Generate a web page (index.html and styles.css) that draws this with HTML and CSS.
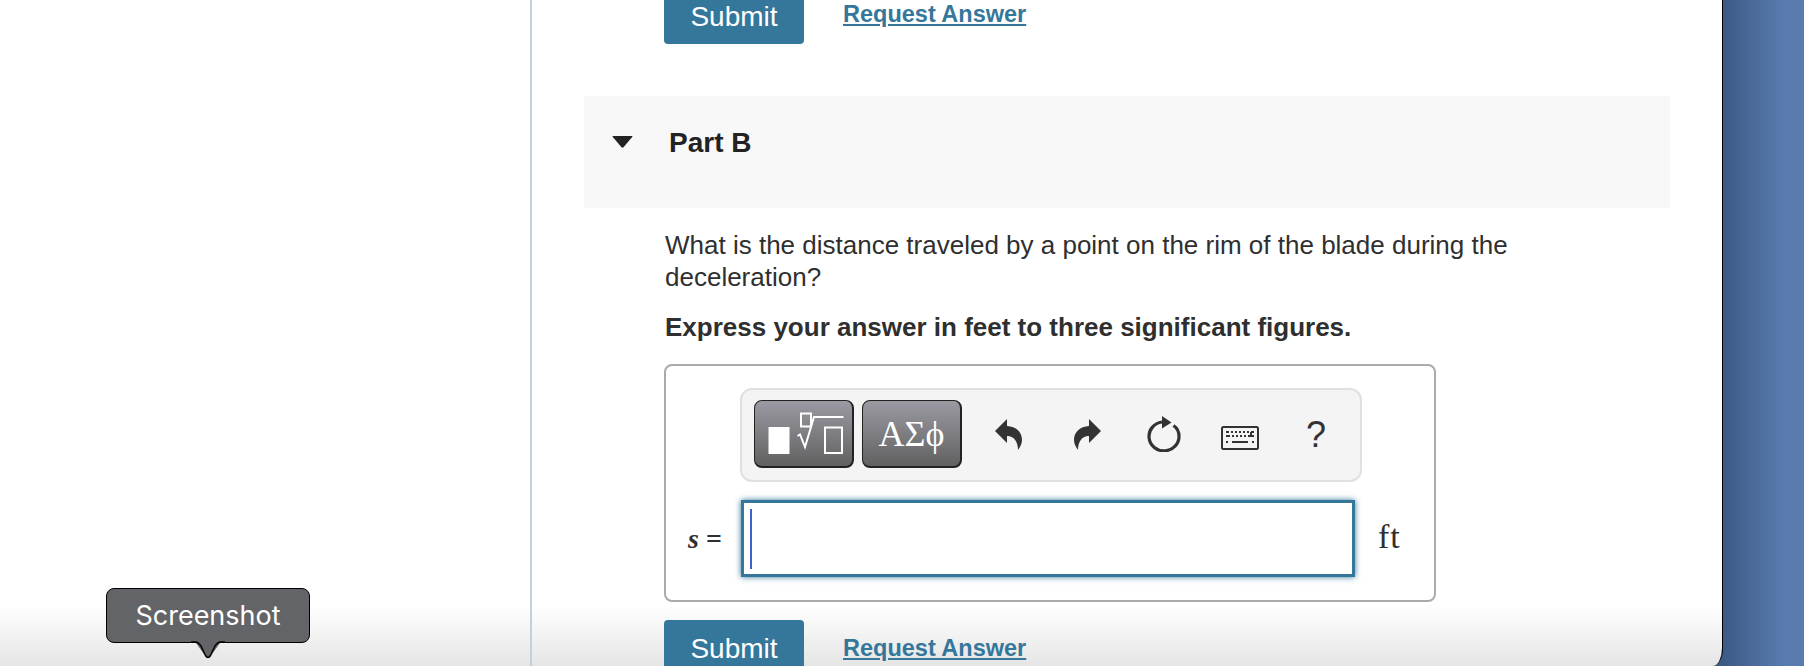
FILE: index.html
```html
<!DOCTYPE html>
<html lang="en">
<head>
    <meta charset="UTF-8">
    <meta name="viewport" content="width=device-width, initial-scale=1.0">
    <title>Part B</title>
    <link rel="stylesheet" href="styles.css">
</head>
<body>
    <div class="desktop">
        <div class="window">
            <div class="sidebar"></div>
            <div class="main">
                <div class="actions">
                    <button class="submit">Submit</button>
                    <a href="#" class="request request-top">Request Answer</a>
                </div>

                <div class="part-header">
                    <svg class="caret" width="21" height="12" viewBox="0 0 21 12"><path d="M1 0H20Q21 0 20.200 1L11.500 11.300Q10.500 12 9.500 11.300L0.800 1Q0 0 1 0Z"/></svg>
                    <h2>Part B</h2>
                </div>

                <div class="part-body">
                    <p class="question">What is the distance traveled by a point on the rim of the blade during the deceleration?</p>
                    <p class="hint">Express your answer in feet to three significant figures.</p>

                    <div class="answer-box">
                        <div class="toolbar">
                            <button class="tool-btn">
                                <svg width="80" height="44" viewBox="0 0 80 44">
                                    <rect x="4.500" y="15" width="21" height="27" fill="#fff"/>
                                    <rect x="37" y="1.500" width="10" height="13" fill="none" stroke="#fff" stroke-width="2"/>
                                    <path d="M33.500 24L36 22.500L41 35L50 5H79.500" fill="none" stroke="#fff" stroke-width="2"/>
                                    <rect x="61" y="15.500" width="17" height="25.500" fill="none" stroke="#fff" stroke-width="2"/>
                                </svg>
                            </button>
                            <button class="tool-btn tool-greek">ΑΣϕ</button>
                            <svg class="icon-undo" width="27" height="31" viewBox="0 0 27 31"><path class="ink" d="M0 12L12 0V7C21 7.500 27 13 27 21C27 25 25 28 23 31C23 24 20 17 12 17V24Z"/></svg>
                            <svg class="icon-redo" width="27" height="31" viewBox="0 0 27 31"><path class="ink" d="M27 12L15 0V7C6 7.500 0 13 0 21C0 25 2 28 4 31C4 24 7 17 15 17V24Z"/></svg>
                            <svg class="icon-reset" width="34" height="36" viewBox="0 0 34 36"><path d="M26.500 9.500C30 12 32 15.500 32 20A15 14.500 0 1 1 15 6" fill="none" stroke="#333" stroke-width="3.200"/><path class="ink" d="M15 0L24.500 6.500L15 12.500Z"/></svg>
                            <svg class="icon-keys" width="38" height="24" viewBox="0 0 38 24">
                                <rect x="1" y="1" width="36" height="22" rx="1.500" fill="none" stroke="#333" stroke-width="2"/>
                                <path d="M5 6H8M10 6H12M14 6H16M18 6H20M22 6H24M26 6H28M30 6H33M5 10H9M11 10H13M15 10H17M19 10H21M23 10H25M27 10H33M30 6V10M5 16H7M11 16H27M31 16H33" fill="none" stroke="#333" stroke-width="2"/>
                            </svg>
                            <span class="icon-help">?</span>
                        </div>
                        <div class="answer-row">
                            <span class="answer-label"><i>s</i> =</span>
                            <div class="answer-input"><span class="text-caret"></span></div>
                            <span class="answer-unit">ft</span>
                        </div>
                    </div>

                    <div class="actions">
                        <button class="submit">Submit</button>
                        <a href="#" class="request">Request Answer</a>
                    </div>
                </div>
            </div>
        </div>

        <div class="dock-tip">
            Screenshot
            <svg class="dock-tip-arrow" width="34" height="20" viewBox="0 0 34 20">
                <path d="M5 0H29V2L19 16H15L5 2Z" fill="#636467"/>
                <path d="M0 1H4C7 1 8 2 10 5L14.500 14.500C16 17 18 17 19.500 14.500L24 5C26 2 27 1 30 1H34" fill="#636467" stroke="#000" stroke-width="1.500"/>
            </svg>
        </div>
    </div>
</body>
</html>
```

FILE: styles.css
```css
html, body {
    margin: 0;
    padding: 0;
    height: 666px;
    overflow: hidden;
}
body {
    font-family: "Liberation Sans", Arial, sans-serif;
    color: #2f2f2f;
}
.desktop {
    position: relative;
    height: 666px;
    display: flex;
    overflow: hidden;
    background: linear-gradient(to right, #3d5a85 1722px, #3d5a85 1723px, #5a7bb0 1785px);
}
.window {
    width: 1723px;
    height: 666px;
    box-sizing: border-box;
    display: flex;
    border-right: 1.5px solid #000;
    border-bottom-right-radius: 10px 18px;
    overflow: hidden;
    background: linear-gradient(to bottom, #fff 605px, #e5e5e5 666px);
}
.sidebar {
    width: 530px;
    flex: none;
    border-right: 2px solid #c2cfe0;
}
.main {
    flex: 1;
    margin-top: -12px;
    padding: 0 52px;
}

.actions {
    display: flex;
    align-items: center;
    gap: 39px;
    margin-left: 80px;
}
.submit {
    width: 140px;
    height: 56px;
    padding: 2px 0 0;
    border: none;
    border-radius: 4px;
    background-color: #34779a;
    color: #fff;
    font-family: inherit;
    font-size: 28px;
}
.request {
    color: #34779a;
    font-size: 23.500px;
    font-weight: bold;
}
.request-top {
    margin-top: -4px;
}

.part-header {
    display: flex;
    align-items: flex-start;
    height: 112px;
    margin-top: 52px;
    background-color: #f8f8f8;
}
.caret {
    margin: 40px 0 0 28px;
    fill: #222;
}
.part-header h2 {
    margin: 31px 0 0 36px;
    font-size: 28px;
    line-height: 32px;
    color: #222;
}

.part-body {
    padding-top: 21px;
}
.question, .hint {
    margin: 0 0 0 81px;
    width: 880px;
    font-size: 26px;
    line-height: 32px;
}
.hint {
    margin-top: 18px;
    font-weight: bold;
}

.answer-box {
    width: 772px;
    height: 238px;
    box-sizing: border-box;
    margin: 21px 0 18px 80px;
    padding-top: 22px;
    border: 2px solid #aaa;
    border-radius: 8px;
    background-color: #fff;
}
.toolbar {
    position: relative;
    display: flex;
    align-items: center;
    width: 622px;
    height: 94px;
    box-sizing: border-box;
    margin-left: 74px;
    padding-left: 12px;
    border: 2px solid #e0e0e0;
    border-radius: 12px;
    background-color: #f4f4f4;
}
.tool-btn {
    width: 100px;
    height: 68px;
    padding: 0;
    margin: -2px 8px 0 0;
    border: 1px solid #222;
    border-right-width: 2px;
    border-bottom-width: 2px;
    border-radius: 8px;
    background: linear-gradient(to bottom, #9b9aa3, #616161);
    display: flex;
    align-items: center;
    justify-content: center;
}
.tool-greek {
    color: #fff;
    font-family: "Liberation Serif", "Times New Roman", serif;
    font-size: 36px;
}
.ink {
    fill: #333;
}
.icon-undo {
    margin: -1px 0 0 25px;
}
.icon-redo {
    margin: -1px 0 0 52px;
}
.icon-reset {
    margin: -3px 0 0 46px;
}
.icon-keys {
    margin: 5px 0 0 40px;
}
.icon-help {
    margin: -1px 0 0 47px;
    font-size: 36px;
    color: #333;
}

.answer-row {
    display: flex;
    align-items: center;
    margin-top: 18px;
}
.answer-label {
    width: 53px;
    margin-left: 22px;
    font-family: "Liberation Serif", "Times New Roman", serif;
    font-size: 28px;
    font-weight: bold;
    white-space: nowrap;
}
.answer-input {
    width: 614px;
    height: 77px;
    box-sizing: border-box;
    padding: 6px 0 0 6px;
    border: 3px solid #34779a;
    box-shadow: 0 0 6px #34779a;
    background-color: #fff;
}
.text-caret {
    display: block;
    width: 2px;
    height: 60px;
    background-color: #3a62d0;
}
.answer-unit {
    margin: -4px 0 0 23px;
    font-family: "Liberation Serif", "Times New Roman", serif;
    font-size: 34px;
    letter-spacing: 1px;
}

.dock-tip {
    position: absolute;
    left: 106px;
    top: 588px;
    width: 204px;
    height: 55px;
    box-sizing: border-box;
    border: 1.500px solid #000;
    border-radius: 8px;
    background-color: #636467;
    color: #fff;
    font-family: Inter, "Liberation Sans", sans-serif;
    font-size: 27px;
    line-height: 54px;
    text-align: center;
}
.dock-tip-arrow {
    position: absolute;
    left: 84px;
    top: 52px;
}
```
